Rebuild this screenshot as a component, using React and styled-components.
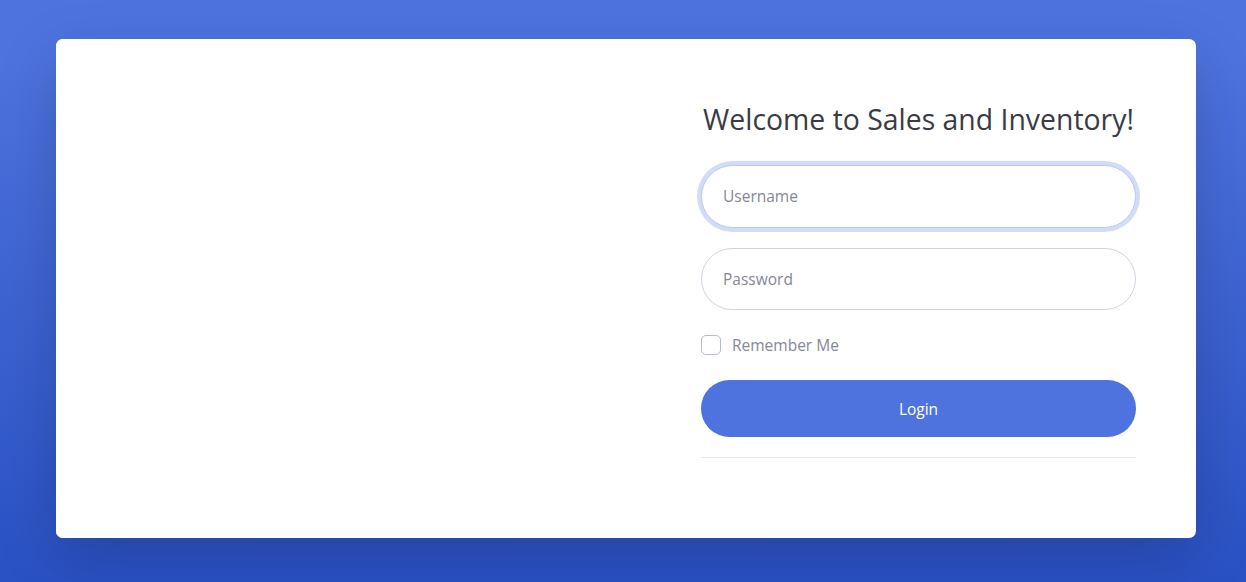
import React from 'react';
import styled, {createGlobalStyle} from 'styled-components';

const GlobalStyle = createGlobalStyle`
  html, body {
    margin: 0;
    height: 100%;
  }
  body {
    font-family: "Open Sans", "Noto Sans", sans-serif;
    background: linear-gradient(180deg, #4e73df 10%, #2a51c4 100%);
    min-height: 582px;
  }
  * {
    box-sizing: border-box;
  }
`;

const Page = styled.div`
  display: flex;
  padding: 39px 0 0 56px;
`;

const Card = styled.div`
  width: 1140px;
  height: 499px;
  background: #fff;
  border-radius: 7px;
  box-shadow: 0 20px 60px rgba(0, 0, 0, 0.175);
  display: grid;
  grid-template-columns: 585px minmax(0, 1fr);
  overflow: hidden;
`;

const ImagePane = styled.div`
  background: #fff;
`;

const FormPane = styled.div`
  padding: 60px;
`;

const Title = styled.h4`
  margin: 0 0 30px;
  padding-top: 2px;
  height: 36px;
  font-size: 28.4px;
  font-weight: 400;
  line-height: 36px;
  color: #3a3b45;
  text-align: center;
  white-space: nowrap;
`;

const Form = styled.form`
  display: flex;
  flex-direction: column;
`;

const Input = styled.input`
  display: block;
  width: 100%;
  height: 62.5px;
  margin-bottom: 20px;
  padding: 0 21px;
  font-family: inherit;
  font-size: 15.5px;
  color: #6e707e;
  background: #fff;
  border: 1px solid ${(props) => (props.$focused ? '#bac8f3' : '#d1d3e2')};
  border-radius: 200px;
  box-shadow: ${(props) =>
    props.$focused ? '0 0 0 4px rgba(78, 115, 223, 0.25)' : 'none'};
  outline: none;

  &::placeholder {
    color: #858796;
  }
`;

const CheckRow = styled.label`
  display: flex;
  align-items: center;
  height: 30px;
  margin-bottom: 20px;
  gap: 11px;
  font-size: 15.5px;
  color: #858796;
  cursor: pointer;
`;

const CheckBox = styled.span`
  width: 20px;
  height: 20px;
  border: 1px solid #b7b9cc;
  border-radius: 5px;
  background: #fff;
`;

const Button = styled.button`
  height: 57px;
  width: 100%;
  border: none;
  border-radius: 200px;
  background: #4e73df;
  color: #fff;
  font-family: inherit;
  font-size: 15.5px;
  cursor: pointer;
`;

const Divider = styled.hr`
  margin: 20px 0;
  border: 0;
  border-top: 1px solid #e3e6f0;
`;

export default function App() {
  return (
    <>
      <GlobalStyle />
      <Page>
        <Card>
          <ImagePane />
          <FormPane>
            <Title>Welcome to Sales and Inventory!</Title>
            <Form onSubmit={(e) => e.preventDefault()}>
              <Input type="text" placeholder="Username" $focused autoFocus />
              <Input type="password" placeholder="Password" />
              <CheckRow>
                <CheckBox />
                Remember Me
              </CheckRow>
              <Button type="submit">Login</Button>
              <Divider />
            </Form>
          </FormPane>
        </Card>
      </Page>
    </>
  );
}
